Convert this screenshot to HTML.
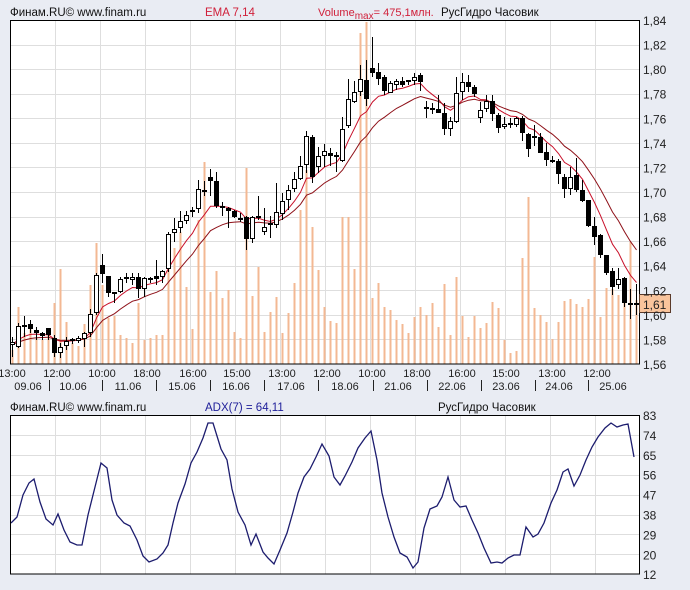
<!DOCTYPE html>
<html><head><meta charset="utf-8">
<style>
html,body{margin:0;padding:0;background:#e9ecf3;}
svg{display:block;font-family:"Liberation Sans",Arial,sans-serif;}
</style></head>
<body>
<svg id="s" width="690" height="590" xmlns="http://www.w3.org/2000/svg">
<rect width="690" height="590" fill="#e9ecf3"/>
<rect x="11" y="20" width="629" height="344" fill="#ffffff"/>
<rect x="11" y="415" width="629" height="159" fill="#ffffff"/>
<g id="grid" stroke="#dedede" stroke-width="1"></g>
<g id="vol" fill="#f3b893"></g>
<g id="ema" fill="none" stroke-width="1"></g>
<g id="cdl"></g>
<polyline id="adx" fill="none" stroke="#1c1c6e" stroke-width="1.3"/>
<rect x="10.5" y="20.5" width="629" height="343.5" fill="none" stroke="#000" stroke-width="1"/>
<rect x="10.5" y="415.5" width="629" height="158.5" fill="none" stroke="#000" stroke-width="1"/>
<rect x="639.5" y="294.5" width="31" height="18" fill="#f9c49c" stroke="#5a3a2a"/>
<g font-size="11.5" fill="#111">
<text x="10" y="16">Финам.RU©  www.finam.ru</text>
<text x="205" y="16" fill="#d0203a">EMA 7,14</text>
<text x="318" y="16" fill="#d0203a" font-size="11">Volume<tspan font-size="10" dy="3">max</tspan><tspan dy="-3">= 475,1млн.</tspan></text>
<text x="441" y="16">РусГидро Часовик</text>
<text x="10" y="411">Финам.RU©  www.finam.ru</text>
<text x="205" y="411" fill="#20209a">ADX(7) = 64,11</text>
<text x="438" y="411">РусГидро Часовик</text>
</g>
<g id="ylab" font-size="12" fill="#222"></g>
<g id="xlab" font-size="11" fill="#222" text-anchor="middle"></g>
</svg>
<script>
var NS="http://www.w3.org/2000/svg";
function el(p,t,a,txt){var e=document.createElementNS(NS,t);for(var k in a)e.setAttribute(k,a[k]);if(txt!=null)e.textContent=txt;document.getElementById(p).appendChild(e);return e;}
var vx=[55.5,100.5,145.5,190.5,235.5,280.5,325.5,370.5,415.5,460.5,505.5,550.5,595.5];
vx.forEach(function(x){el("grid","line",{x1:x,y1:21,x2:x,y2:364});el("grid","line",{x1:x,y1:416,x2:x,y2:574});});
var pl=["1,84","1,82","1,80","1,78","1,76","1,74","1,72","1,70","1,68","1,66","1,64","1,62","1,60","1,58","1,56"];
for(var k=0;k<15;k++){var y=20+24.57*k;if(k>0&&k<14)el("grid","line",{x1:11,y1:Math.round(y)+.5,x2:640,y2:Math.round(y)+.5});
 el("ylab","text",{x:643,y:y+5},pl[k]);}
el("ylab","text",{x:643,y:309},"1,61");
var al=["83","74","65","56","47","38","29","20","12"];
for(k=0;k<9;k++){var y=415+19.9*k;if(k>0&&k<8)el("grid","line",{x1:11,y1:Math.round(y)+.5,x2:640,y2:Math.round(y)+.5});el("ylab","text",{x:643,y:y+5},al[k]);}
var r1=[[12,"13:00"],[57,"12:00"],[102,"10:00"],[147,"18:00"],[193,"16:00"],[237,"15:00"],[282,"13:00"],[327,"12:00"],[372,"10:00"],[417,"18:00"],[462,"16:00"],[506,"15:00"],[552,"13:00"],[597,"12:00"]];
r1.forEach(function(a){el("xlab","text",{x:a[0],y:377},a[1]);});
var r2=[[28,"09.06"],[73,"10.06"],[128,"11.06"],[182,"15.06"],[236,"16.06"],[291,"17.06"],[345,"18.06"],[398,"21.06"],[452,"22.06"],[506,"23.06"],[559,"24.06"],[613,"25.06"]];
r2.forEach(function(a){el("xlab","text",{x:a[0],y:390},a[1]);});
[49,102,156,210,264,318,373,427,481,535,588].forEach(function(x){el("xlab","line",{x1:x+.5,y1:380,x2:x+.5,y2:391,stroke:"#222"});});
var C=[[342,345,337,357,'w'],[326,347,323,348,'w'],[325,326,316,337,'b'],[324,329,320,333,'b'],[330,333,327,340,'b'],[333,336,332,340,'b'],[328,335,328,340,'b'],[338,353,335,357,'b'],[347,353,343,358,'w'],[341,346,337,350,'w'],[340,340,338,344,'f'],[338,341,336,343,'w'],[333,339,332,347,'w'],[314,333,309,337,'w'],[275,313,273,315,'w'],[265,274,254,283,'b'],[276,293,276,297,'b'],[293,293,292,303,'f'],[279,292,277,293,'w'],[278,278,273,283,'f'],[277,280,273,285,'w'],[277,289,273,298,'b'],[278,289,277,297,'w'],[279,279,277,283,'f'],[276,279,260,285,'b'],[271,277,270,283,'w'],[234,269,232,272,'w'],[229,233,218,242,'w'],[221,228,211,233,'w'],[215,221,211,224,'w'],[211,211,207,217,'f'],[189,209,180,213,'w'],[190,192,181,196,'b'],[177,181,169,196,'b'],[181,206,172,208,'b'],[207,207,202,216,'f'],[208,211,207,228,'b'],[211,217,210,218,'b'],[219,219,213,222,'f'],[217,239,216,250,'b'],[217,239,216,243,'w'],[217,217,196,220,'f'],[227,232,208,235,'w'],[223,225,216,238,'b'],[212,225,183,228,'w'],[201,214,193,220,'w'],[190,200,185,210,'w'],[179,189,172,192,'w'],[166,179,156,180,'w'],[136,165,131,173,'w'],[137,177,135,183,'b'],[156,167,147,173,'w'],[151,156,144,167,'w'],[153,156,148,166,'b'],[155,157,152,172,'b'],[129,161,117,162,'w'],[99,126,79,128,'w'],[92,102,81,103,'w'],[79,92,65,96,'w'],[80,99,60,106,'b'],[68,73,37,77,'b'],[72,79,63,85,'b'],[77,91,75,95,'b'],[83,93,81,93,'w'],[81,85,79,90,'w'],[81,85,77,87,'b'],[81,81,80,85,'f'],[77,81,73,85,'w'],[75,82,73,91,'b'],[107,109,101,118,'b'],[109,109,103,114,'f'],[109,113,95,113,'b'],[113,129,103,135,'b'],[121,129,117,136,'w'],[93,122,77,123,'w'],[82,92,73,100,'w'],[82,87,75,92,'b'],[87,94,85,97,'b'],[110,118,102,123,'w'],[101,109,95,112,'w'],[101,114,95,121,'b'],[115,128,113,133,'b'],[124,127,117,129,'w'],[123,125,118,128,'b'],[118,125,117,127,'w'],[118,133,116,141,'b'],[134,149,133,157,'b'],[137,137,125,146,'f'],[137,153,133,153,'b'],[152,160,143,166,'b'],[161,161,156,163,'f'],[161,174,159,184,'b'],[177,189,174,198,'b'],[177,189,167,195,'w'],[175,190,158,192,'b'],[190,201,180,202,'b'],[200,226,200,227,'b'],[226,237,217,245,'b'],[235,255,234,258,'b'],[255,273,255,275,'b'],[271,287,268,295,'b'],[279,285,268,289,'w'],[278,303,277,307,'b'],[303,305,289,319,'b'],[304,304,284,315,'f']];
var V=[350,307,333,325,338,340,335,303,269,322,343,346,324,285,243,285,318,316,335,338,343,303,340,338,335,335,249,248,232,287,329,220,162,292,271,298,290,332,338,168,296,267,332,312,297,333,313,283,210,170,227,270,307,321,323,217,217,269,33,22,298,283,307,310,320,324,333,317,307,315,303,327,284,335,277,316,337,316,328,323,302,308,340,353,351,258,197,308,315,322,339,322,301,299,304,307,299,257,317,288,289,295,290,242,300];
var cl=[];
for(var i=0;i<C.length;i++){var x=12.5+6*i,c=C[i];
 el("vol","rect",{x:x-1,y:V[i],width:2,height:364-V[i]});
 cl.push(c[4]=='w'?c[0]:(c[4]=='b'?c[1]:c[0]));}
function ema(n){var a=2/(n+1),e=cl[0]+3,pts=[];for(var i=0;i<cl.length;i++){e=e+a*(cl[i]-e);pts.push((12.5+6*i)+","+e.toFixed(1));}return pts.join(" ");}
el("ema","polyline",{points:ema(7),stroke:"#c8102a"});
el("ema","polyline",{points:ema(14),stroke:"#8e1018"});
for(i=0;i<C.length;i++){var x=12.5+6*i,c=C[i];
 el("cdl","line",{x1:x,y1:c[2],x2:x,y2:c[3],stroke:"#000","stroke-width":1});
 if(c[4]=='f')el("cdl","rect",{x:x-2.5,y:c[0]-1,width:5,height:2,fill:"#000"});
 else if(c[4]=='b')el("cdl","rect",{x:x-2.5,y:c[0],width:5,height:Math.max(2,c[1]-c[0]),fill:"#000"});
 else el("cdl","rect",{x:x-2,y:c[0]+.5,width:4,height:Math.max(1.5,c[1]-c[0]-1),fill:"#fff",stroke:"#000","stroke-width":1});}
document.getElementById("adx").setAttribute("points","11,523 17,517 23,495 29,483 34,479 40,502 46,519 53,525 58,514 64,530 70,542 77,545 82,545 88,515 95,487 101,463 107,468 112,500 117,515 124,523 130,526 137,540 143,556 149,562 157,559 163,553 168,545 173,523 178,503 185,484 191,463 197,452 203,438 208,423 213,423 221,449 227,460 232,489 238,512 245,525 251,545 256,534 263,552 268,558 274,564 280,550 287,533 293,512 298,493 304,477 310,469 316,457 322,444 329,456 334,477 340,485 345,476 352,462 358,448 365,438 371,431 377,460 382,493 388,517 394,537 400,553 407,557 413,568 418,562 424,528 430,509 437,506 442,497 448,477 454,500 460,507 466,506 472,520 478,533 484,548 491,563 497,562 502,563 508,558 514,555 520,555 526,527 533,537 538,534 544,523 551,503 557,490 563,472 568,469 574,486 580,475 586,460 592,447 598,437 605,428 611,423 617,427 623,425 628,424 634,457");
</script>
</body></html>
